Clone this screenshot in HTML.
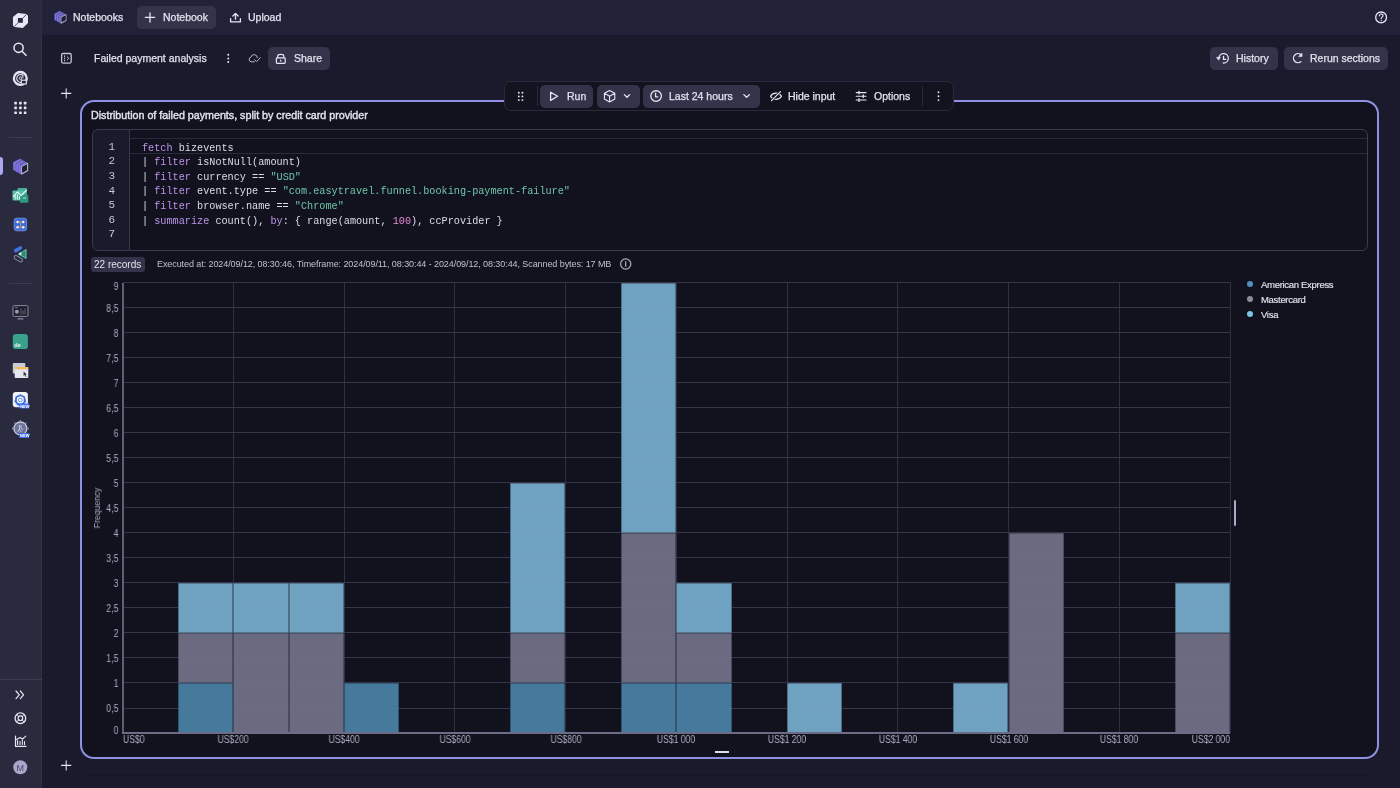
<!DOCTYPE html><html><head><meta charset="utf-8"><style>
*{box-sizing:border-box;margin:0;padding:0}
html,body{width:1400px;height:788px;overflow:hidden;background:#1a1a2c;font-family:"Liberation Sans",sans-serif;color:#e6e6ef}
.a{position:absolute}
.t,.code,.ax{will-change:transform}
.t{position:absolute;white-space:nowrap;font-size:10.5px;line-height:12px;color:#e2e2ee;-webkit-text-stroke:0.25px #e2e2ee}
.btn{position:absolute;background:#33344a;border-radius:5px}
.code{position:absolute;font-family:"Liberation Mono",monospace;font-size:10.2px;line-height:12px;white-space:pre;color:#dcdce8}
.kw{color:#bb92e8}.str{color:#6fc4a8}.num{color:#e68ad6}
.ax{position:absolute;font-size:10px;line-height:10px;color:#acacbf;white-space:nowrap}
#ov{position:absolute;left:0;top:0;width:1400px;height:788px;overflow:visible}
</style></head><body>
<div class="a" style="left:0;top:0;width:42px;height:788px;background:#2a2a3e"></div>
<div class="a" style="left:41px;top:0;width:1px;height:788px;background:#2f3045"></div>
<div class="a" style="left:42px;top:0;width:1358px;height:35px;background:#212238"></div>
<div class="a" style="left:9px;top:137px;width:23px;height:1px;background:#3c3c52"></div>
<div class="a" style="left:9px;top:283px;width:23px;height:1px;background:#3c3c52"></div>
<div class="a" style="left:0;top:679px;width:42px;height:1px;background:#3c3c52"></div>
<div class="a" style="left:0;top:157px;width:3px;height:18px;background:#a9a8f0;border-radius:0 3px 3px 0"></div>
<div class="btn" style="left:137px;top:6px;width:79px;height:23px"></div>
<div class="t" style="left:73px;top:11px">Notebooks</div>
<div class="t" style="left:163px;top:11px">Notebook</div>
<div class="t" style="left:248px;top:11px">Upload</div>
<div class="t" style="left:93.5px;top:52px">Failed payment analysis</div>
<div class="btn" style="left:268px;top:47px;width:62px;height:23px"></div>
<div class="t" style="left:294px;top:52px">Share</div>
<div class="btn" style="left:1210px;top:47px;width:68px;height:23px"></div>
<div class="t" style="left:1235.5px;top:52px">History</div>
<div class="btn" style="left:1284px;top:47px;width:104px;height:23px"></div>
<div class="t" style="left:1309.5px;top:52px">Rerun sections</div>
<div class="a" style="left:80px;top:100px;width:1299px;height:659px;border:2px solid #8f92e0;border-radius:14px;background:#12121f"></div>
<div class="t" style="left:91px;top:109px;font-size:10.7px;-webkit-text-stroke:0.4px #e2e2ee">Distribution of failed payments, split by credit card provider</div>
<div class="a" style="left:86px;top:773.5px;width:1284px;height:2px;background:#151524;border-radius:1px"></div>
<div class="a" style="left:504px;top:81px;width:450px;height:30px;border:1px solid #2a2a3e;border-radius:7px;background:#131320"></div>
<div class="a" style="left:536.5px;top:86px;width:1px;height:20px;background:#2a2a3e"></div>
<div class="a" style="left:921.5px;top:86px;width:1px;height:20px;background:#2a2a3e"></div>
<div class="btn" style="left:540px;top:85px;width:53px;height:23px"></div>
<div class="t" style="left:566.5px;top:90px">Run</div>
<div class="btn" style="left:597px;top:85px;width:43px;height:23px"></div>
<div class="btn" style="left:643px;top:85px;width:117px;height:23px"></div>
<div class="t" style="left:668.5px;top:90px">Last 24 hours</div>
<div class="t" style="left:788px;top:90px">Hide input</div>
<div class="t" style="left:874px;top:90px">Options</div>
<div class="a" style="left:91.5px;top:128.5px;width:1276px;height:122px;border:1px solid #3a3a50;border-radius:6px;background:linear-gradient(to right,#191a2b 0,#191a2b 37px,#12121f 37px)"></div>
<div class="a" style="left:128.7px;top:129px;width:1.3px;height:121px;background:#363850"></div>
<div class="a" style="left:130px;top:138px;width:1237px;height:16px;border-top:1px solid #2a2a3e;border-bottom:1px solid #2a2a3e"></div>
<div class="code" style="left:95px;top:140.7px;width:20px;text-align:right;color:#c4c4d4;font-size:11px">1</div>
<div class="code" style="left:142px;top:142.5px"><span class="kw">fetch</span> bizevents</div>
<div class="code" style="left:95px;top:155.3px;width:20px;text-align:right;color:#c4c4d4;font-size:11px">2</div>
<div class="code" style="left:142px;top:157.1px">| <span class="kw">filter</span> isNotNull(amount)</div>
<div class="code" style="left:95px;top:169.9px;width:20px;text-align:right;color:#c4c4d4;font-size:11px">3</div>
<div class="code" style="left:142px;top:171.7px">| <span class="kw">filter</span> currency == <span class="str">"USD"</span></div>
<div class="code" style="left:95px;top:184.6px;width:20px;text-align:right;color:#c4c4d4;font-size:11px">4</div>
<div class="code" style="left:142px;top:186.4px">| <span class="kw">filter</span> event.type == <span class="str">"com.easytravel.funnel.booking-payment-failure"</span></div>
<div class="code" style="left:95px;top:199.2px;width:20px;text-align:right;color:#c4c4d4;font-size:11px">5</div>
<div class="code" style="left:142px;top:201.0px">| <span class="kw">filter</span> browser.name == <span class="str">"Chrome"</span></div>
<div class="code" style="left:95px;top:213.8px;width:20px;text-align:right;color:#c4c4d4;font-size:11px">6</div>
<div class="code" style="left:142px;top:215.6px">| <span class="kw">summarize</span> count(), <span class="kw">by</span>: { range(amount, <span class="num">100</span>), ccProvider }</div>
<div class="code" style="left:95px;top:228.4px;width:20px;text-align:right;color:#c4c4d4;font-size:11px">7</div>
<div class="code" style="left:142px;top:230.2px"></div>
<div class="a" style="left:91px;top:257px;width:54px;height:14.5px;background:#33344b;border-radius:3px"></div>
<div class="t" style="left:93.5px;top:258.8px;font-size:10px;-webkit-text-stroke:0">22 records</div>
<div class="t" style="left:157px;top:258px;font-size:9px;letter-spacing:-0.08px;color:#c0c0cc;-webkit-text-stroke:0">Executed at: 2024/09/12, 08:30:46, Timeframe: 2024/09/11, 08:30:44 - 2024/09/12, 08:30:44, Scanned bytes: 17 MB</div>
<div class="a" style="left:122.5px;top:732.5px;width:1107.5px;height:1px;background:#2f2f44"></div>
<div class="a" style="left:122.5px;top:707.5px;width:1107.5px;height:1px;background:#2f2f44"></div>
<div class="a" style="left:122.5px;top:682.4px;width:1107.5px;height:1px;background:#2f2f44"></div>
<div class="a" style="left:122.5px;top:657.4px;width:1107.5px;height:1px;background:#2f2f44"></div>
<div class="a" style="left:122.5px;top:632.4px;width:1107.5px;height:1px;background:#2f2f44"></div>
<div class="a" style="left:122.5px;top:607.4px;width:1107.5px;height:1px;background:#2f2f44"></div>
<div class="a" style="left:122.5px;top:582.3px;width:1107.5px;height:1px;background:#2f2f44"></div>
<div class="a" style="left:122.5px;top:557.3px;width:1107.5px;height:1px;background:#2f2f44"></div>
<div class="a" style="left:122.5px;top:532.3px;width:1107.5px;height:1px;background:#2f2f44"></div>
<div class="a" style="left:122.5px;top:507.3px;width:1107.5px;height:1px;background:#2f2f44"></div>
<div class="a" style="left:122.5px;top:482.2px;width:1107.5px;height:1px;background:#2f2f44"></div>
<div class="a" style="left:122.5px;top:457.2px;width:1107.5px;height:1px;background:#2f2f44"></div>
<div class="a" style="left:122.5px;top:432.2px;width:1107.5px;height:1px;background:#2f2f44"></div>
<div class="a" style="left:122.5px;top:407.1px;width:1107.5px;height:1px;background:#2f2f44"></div>
<div class="a" style="left:122.5px;top:382.1px;width:1107.5px;height:1px;background:#2f2f44"></div>
<div class="a" style="left:122.5px;top:357.1px;width:1107.5px;height:1px;background:#2f2f44"></div>
<div class="a" style="left:122.5px;top:332.1px;width:1107.5px;height:1px;background:#2f2f44"></div>
<div class="a" style="left:122.5px;top:307.0px;width:1107.5px;height:1px;background:#2f2f44"></div>
<div class="a" style="left:122.5px;top:282.0px;width:1107.5px;height:1px;background:#2f2f44"></div>
<div class="a" style="left:232.8px;top:282.0px;width:1px;height:450.5px;background:#2f2f44"></div>
<div class="a" style="left:343.5px;top:282.0px;width:1px;height:450.5px;background:#2f2f44"></div>
<div class="a" style="left:454.2px;top:282.0px;width:1px;height:450.5px;background:#2f2f44"></div>
<div class="a" style="left:565.0px;top:282.0px;width:1px;height:450.5px;background:#2f2f44"></div>
<div class="a" style="left:675.8px;top:282.0px;width:1px;height:450.5px;background:#2f2f44"></div>
<div class="a" style="left:786.5px;top:282.0px;width:1px;height:450.5px;background:#2f2f44"></div>
<div class="a" style="left:897.2px;top:282.0px;width:1px;height:450.5px;background:#2f2f44"></div>
<div class="a" style="left:1008.0px;top:282.0px;width:1px;height:450.5px;background:#2f2f44"></div>
<div class="a" style="left:1118.8px;top:282.0px;width:1px;height:450.5px;background:#2f2f44"></div>
<div class="a" style="left:1229.5px;top:282.0px;width:1px;height:450.5px;background:#2f2f44"></div>
<div class="a" style="left:177.9px;top:682.9px;width:55.4px;height:50.1px;background:#457a9c;box-shadow:inset 0 0 0 0.6px rgba(18,18,31,.6)"></div>
<div class="a" style="left:177.9px;top:632.9px;width:55.4px;height:50.1px;background:#6a6b80;box-shadow:inset 0 0 0 0.6px rgba(18,18,31,.6)"></div>
<div class="a" style="left:177.9px;top:582.8px;width:55.4px;height:50.1px;background:#6fa2c0;box-shadow:inset 0 0 0 0.6px rgba(18,18,31,.6)"></div>
<div class="a" style="left:233.2px;top:632.9px;width:55.4px;height:100.1px;background:#6a6b80;box-shadow:inset 0 0 0 0.6px rgba(18,18,31,.6)"></div>
<div class="a" style="left:233.2px;top:582.8px;width:55.4px;height:50.1px;background:#6fa2c0;box-shadow:inset 0 0 0 0.6px rgba(18,18,31,.6)"></div>
<div class="a" style="left:288.6px;top:632.9px;width:55.4px;height:100.1px;background:#6a6b80;box-shadow:inset 0 0 0 0.6px rgba(18,18,31,.6)"></div>
<div class="a" style="left:288.6px;top:582.8px;width:55.4px;height:50.1px;background:#6fa2c0;box-shadow:inset 0 0 0 0.6px rgba(18,18,31,.6)"></div>
<div class="a" style="left:344.0px;top:682.9px;width:55.4px;height:50.1px;background:#457a9c;box-shadow:inset 0 0 0 0.6px rgba(18,18,31,.6)"></div>
<div class="a" style="left:510.1px;top:682.9px;width:55.4px;height:50.1px;background:#457a9c;box-shadow:inset 0 0 0 0.6px rgba(18,18,31,.6)"></div>
<div class="a" style="left:510.1px;top:632.9px;width:55.4px;height:50.1px;background:#6a6b80;box-shadow:inset 0 0 0 0.6px rgba(18,18,31,.6)"></div>
<div class="a" style="left:510.1px;top:482.7px;width:55.4px;height:150.2px;background:#6fa2c0;box-shadow:inset 0 0 0 0.6px rgba(18,18,31,.6)"></div>
<div class="a" style="left:620.9px;top:682.9px;width:55.4px;height:50.1px;background:#457a9c;box-shadow:inset 0 0 0 0.6px rgba(18,18,31,.6)"></div>
<div class="a" style="left:620.9px;top:532.8px;width:55.4px;height:150.2px;background:#6a6b80;box-shadow:inset 0 0 0 0.6px rgba(18,18,31,.6)"></div>
<div class="a" style="left:620.9px;top:282.5px;width:55.4px;height:250.3px;background:#6fa2c0;box-shadow:inset 0 0 0 0.6px rgba(18,18,31,.6)"></div>
<div class="a" style="left:676.2px;top:682.9px;width:55.4px;height:50.1px;background:#457a9c;box-shadow:inset 0 0 0 0.6px rgba(18,18,31,.6)"></div>
<div class="a" style="left:676.2px;top:632.9px;width:55.4px;height:50.1px;background:#6a6b80;box-shadow:inset 0 0 0 0.6px rgba(18,18,31,.6)"></div>
<div class="a" style="left:676.2px;top:582.8px;width:55.4px;height:50.1px;background:#6fa2c0;box-shadow:inset 0 0 0 0.6px rgba(18,18,31,.6)"></div>
<div class="a" style="left:787.0px;top:682.9px;width:55.4px;height:50.1px;background:#6fa2c0;box-shadow:inset 0 0 0 0.6px rgba(18,18,31,.6)"></div>
<div class="a" style="left:953.1px;top:682.9px;width:55.4px;height:50.1px;background:#6fa2c0;box-shadow:inset 0 0 0 0.6px rgba(18,18,31,.6)"></div>
<div class="a" style="left:1008.5px;top:532.8px;width:55.4px;height:200.2px;background:#6a6b80;box-shadow:inset 0 0 0 0.6px rgba(18,18,31,.6)"></div>
<div class="a" style="left:1174.6px;top:632.9px;width:55.4px;height:100.1px;background:#6a6b80;box-shadow:inset 0 0 0 0.6px rgba(18,18,31,.6)"></div>
<div class="a" style="left:1174.6px;top:582.8px;width:55.4px;height:50.1px;background:#6fa2c0;box-shadow:inset 0 0 0 0.6px rgba(18,18,31,.6)"></div>
<div class="a" style="left:122.5px;top:707.5px;width:1107.5px;height:1px;background:rgba(140,140,170,.08)"></div>
<div class="a" style="left:122.5px;top:682.4px;width:1107.5px;height:1px;background:rgba(140,140,170,.08)"></div>
<div class="a" style="left:122.5px;top:657.4px;width:1107.5px;height:1px;background:rgba(140,140,170,.08)"></div>
<div class="a" style="left:122.5px;top:632.4px;width:1107.5px;height:1px;background:rgba(140,140,170,.08)"></div>
<div class="a" style="left:122.5px;top:607.4px;width:1107.5px;height:1px;background:rgba(140,140,170,.08)"></div>
<div class="a" style="left:122.5px;top:582.3px;width:1107.5px;height:1px;background:rgba(140,140,170,.08)"></div>
<div class="a" style="left:122.5px;top:557.3px;width:1107.5px;height:1px;background:rgba(140,140,170,.08)"></div>
<div class="a" style="left:122.5px;top:532.3px;width:1107.5px;height:1px;background:rgba(140,140,170,.08)"></div>
<div class="a" style="left:122.5px;top:507.3px;width:1107.5px;height:1px;background:rgba(140,140,170,.08)"></div>
<div class="a" style="left:122.5px;top:482.2px;width:1107.5px;height:1px;background:rgba(140,140,170,.08)"></div>
<div class="a" style="left:122.5px;top:457.2px;width:1107.5px;height:1px;background:rgba(140,140,170,.08)"></div>
<div class="a" style="left:122.5px;top:432.2px;width:1107.5px;height:1px;background:rgba(140,140,170,.08)"></div>
<div class="a" style="left:122.5px;top:407.1px;width:1107.5px;height:1px;background:rgba(140,140,170,.08)"></div>
<div class="a" style="left:122.5px;top:382.1px;width:1107.5px;height:1px;background:rgba(140,140,170,.08)"></div>
<div class="a" style="left:122.5px;top:357.1px;width:1107.5px;height:1px;background:rgba(140,140,170,.08)"></div>
<div class="a" style="left:122.5px;top:332.1px;width:1107.5px;height:1px;background:rgba(140,140,170,.08)"></div>
<div class="a" style="left:122.5px;top:307.0px;width:1107.5px;height:1px;background:rgba(140,140,170,.08)"></div>
<div class="a" style="left:122.5px;top:282.0px;width:1107.5px;height:1px;background:rgba(140,140,170,.08)"></div>
<div class="a" style="left:122.2px;top:282.5px;width:1.6px;height:451.5px;background:#5e5e74"></div>
<div class="a" style="left:122.2px;top:732.1px;width:1107.8px;height:1.8px;background:#6c6c84"></div>
<div class="ax" style="left:80px;width:38.5px;text-align:right;top:726.0px;transform:scaleX(.88);transform-origin:100% 0">0</div>
<div class="ax" style="left:80px;width:38.5px;text-align:right;top:704.0px;transform:scaleX(.88);transform-origin:100% 0">0,5</div>
<div class="ax" style="left:80px;width:38.5px;text-align:right;top:678.9px;transform:scaleX(.88);transform-origin:100% 0">1</div>
<div class="ax" style="left:80px;width:38.5px;text-align:right;top:653.9px;transform:scaleX(.88);transform-origin:100% 0">1,5</div>
<div class="ax" style="left:80px;width:38.5px;text-align:right;top:628.9px;transform:scaleX(.88);transform-origin:100% 0">2</div>
<div class="ax" style="left:80px;width:38.5px;text-align:right;top:603.9px;transform:scaleX(.88);transform-origin:100% 0">2,5</div>
<div class="ax" style="left:80px;width:38.5px;text-align:right;top:578.8px;transform:scaleX(.88);transform-origin:100% 0">3</div>
<div class="ax" style="left:80px;width:38.5px;text-align:right;top:553.8px;transform:scaleX(.88);transform-origin:100% 0">3,5</div>
<div class="ax" style="left:80px;width:38.5px;text-align:right;top:528.8px;transform:scaleX(.88);transform-origin:100% 0">4</div>
<div class="ax" style="left:80px;width:38.5px;text-align:right;top:503.8px;transform:scaleX(.88);transform-origin:100% 0">4,5</div>
<div class="ax" style="left:80px;width:38.5px;text-align:right;top:478.7px;transform:scaleX(.88);transform-origin:100% 0">5</div>
<div class="ax" style="left:80px;width:38.5px;text-align:right;top:453.7px;transform:scaleX(.88);transform-origin:100% 0">5,5</div>
<div class="ax" style="left:80px;width:38.5px;text-align:right;top:428.7px;transform:scaleX(.88);transform-origin:100% 0">6</div>
<div class="ax" style="left:80px;width:38.5px;text-align:right;top:403.6px;transform:scaleX(.88);transform-origin:100% 0">6,5</div>
<div class="ax" style="left:80px;width:38.5px;text-align:right;top:378.6px;transform:scaleX(.88);transform-origin:100% 0">7</div>
<div class="ax" style="left:80px;width:38.5px;text-align:right;top:353.6px;transform:scaleX(.88);transform-origin:100% 0">7,5</div>
<div class="ax" style="left:80px;width:38.5px;text-align:right;top:328.6px;transform:scaleX(.88);transform-origin:100% 0">8</div>
<div class="ax" style="left:80px;width:38.5px;text-align:right;top:303.5px;transform:scaleX(.88);transform-origin:100% 0">8,5</div>
<div class="ax" style="left:80px;width:38.5px;text-align:right;top:281.5px;transform:scaleX(.88);transform-origin:100% 0">9</div>
<div class="ax" style="left:122.5px;top:735px;transform:scaleX(.86);transform-origin:0 0">US$0</div>
<div class="ax" style="left:183.2px;width:100px;text-align:center;top:735px;transform:scaleX(.86)">US$200</div>
<div class="ax" style="left:294.0px;width:100px;text-align:center;top:735px;transform:scaleX(.86)">US$400</div>
<div class="ax" style="left:404.8px;width:100px;text-align:center;top:735px;transform:scaleX(.86)">US$600</div>
<div class="ax" style="left:515.5px;width:100px;text-align:center;top:735px;transform:scaleX(.86)">US$800</div>
<div class="ax" style="left:626.2px;width:100px;text-align:center;top:735px;transform:scaleX(.86)">US$1 000</div>
<div class="ax" style="left:737.0px;width:100px;text-align:center;top:735px;transform:scaleX(.86)">US$1 200</div>
<div class="ax" style="left:847.8px;width:100px;text-align:center;top:735px;transform:scaleX(.86)">US$1 400</div>
<div class="ax" style="left:958.5px;width:100px;text-align:center;top:735px;transform:scaleX(.86)">US$1 600</div>
<div class="ax" style="left:1069.2px;width:100px;text-align:center;top:735px;transform:scaleX(.86)">US$1 800</div>
<div class="ax" style="left:1130.0px;width:100px;text-align:right;top:735px;transform:scaleX(.86);transform-origin:100% 0">US$2 000</div>
<div class="ax" style="left:97px;top:508px;transform:translate(-50%,-50%) rotate(-90deg);font-size:8.6px;color:#a8a8bc">Frequency</div>
<div class="a" style="left:1234px;top:500px;width:2px;height:25.5px;background:#a9a9cc;border-radius:1px"></div>
<div class="a" style="left:714.5px;top:750.5px;width:14px;height:2px;background:#dcdcec"></div>
<div class="a" style="left:1247px;top:281px;width:6px;height:6px;border-radius:50%;background:#4f8fbb"></div>
<div class="t" style="left:1260.5px;top:278.5px;font-size:9.5px;letter-spacing:-0.3px;-webkit-text-stroke:0.15px #e2e2ee">American Express</div>
<div class="a" style="left:1247px;top:296px;width:6px;height:6px;border-radius:50%;background:#8c8c9c"></div>
<div class="t" style="left:1260.5px;top:293.5px;font-size:9.5px;letter-spacing:-0.3px;-webkit-text-stroke:0.15px #e2e2ee">Mastercard</div>
<div class="a" style="left:1247px;top:311px;width:6px;height:6px;border-radius:50%;background:#7ec3e6"></div>
<div class="t" style="left:1260.5px;top:308.5px;font-size:9.5px;letter-spacing:-0.3px;-webkit-text-stroke:0.15px #e2e2ee">Visa</div>
<svg id="ov" viewBox="0 0 1400 788"><path fill="#e6e6f4" fill-rule="evenodd" d="M12.95 17.1 L17.9 12.9 L26.5 14.1 L28 15.8 L28 23 L22.9 28 L14.6 27.1 L12.95 25.5 Z M17.9 18.1 L22.85 18.1 L22.85 22.85 L17.9 22.85 Z"/><path stroke="#2a2a3d" stroke-width="0.8" d="M22.85 18.1 L26.5 14.4 M17.9 22.85 L14.4 26.4"/><circle cx="18.6" cy="47.8" r="4.6" fill="none" stroke="#e6e6f4" stroke-width="1.5" stroke-linecap="round" stroke-linejoin="round"/><path d="M22 51.3 L26 55.2" fill="none" stroke="#e6e6f4" stroke-width="1.6" stroke-linecap="round" stroke-linejoin="round"/><circle cx="20.3" cy="78.4" r="6.4" fill="none" stroke="#e6e6f4" stroke-width="2.3"/><path d="M23.4 75.6 A3.9 3.9 0 1 0 23.4 81.2" fill="none" stroke="#e6e6f4" stroke-width="1.2"/><circle cx="20.6" cy="78.2" r="1.3" fill="none" stroke="#e6e6f4" stroke-width="1"/><path d="M22.6 75 L23 78" stroke="#e6e6f4" stroke-width="0.9"/><rect x="21.3" y="80.2" width="5" height="3.8" fill="#2a2a3d" stroke="#e6e6f4" stroke-width="1.1"/><rect x="14.3" y="101.8" width="2.6" height="2.6" rx="0.4" fill="#e6e6f4"/><rect x="14.3" y="106.6" width="2.6" height="2.6" rx="0.4" fill="#e6e6f4"/><rect x="14.3" y="111.5" width="2.6" height="2.6" rx="0.4" fill="#e6e6f4"/><rect x="19.1" y="101.8" width="2.6" height="2.6" rx="0.4" fill="#e6e6f4"/><rect x="19.1" y="106.6" width="2.6" height="2.6" rx="0.4" fill="#e6e6f4"/><rect x="19.1" y="111.5" width="2.6" height="2.6" rx="0.4" fill="#e6e6f4"/><rect x="23.8" y="101.8" width="2.6" height="2.6" rx="0.4" fill="#e6e6f4"/><rect x="23.8" y="106.6" width="2.6" height="2.6" rx="0.4" fill="#e6e6f4"/><rect x="23.8" y="111.5" width="2.6" height="2.6" rx="0.4" fill="#e6e6f4"/><g transform="translate(54.5,10.5) scale(1.0)"><path transform="translate(0.0,0.0)" d="M0 3.3 L5.3 0.4 L6.8 1.2 L1.6 4.1 L1.6 10.3 L0 9.5 Z" fill="#7e6ef8"/><path transform="translate(0.0,0.0)" d="M1.6 4.1 L6.8 1.2 L7.2 1.45 L2 4.35 L2 10.5 L1.6 10.3 Z" fill="#a9a9c4"/><path transform="translate(2.3,1.25)" d="M0 3.3 L5.3 0.4 L6.8 1.2 L1.6 4.1 L1.6 10.3 L0 9.5 Z" fill="#7e6ef8"/><path transform="translate(2.3,1.25)" d="M1.6 4.1 L6.8 1.2 L7.2 1.45 L2 4.35 L2 10.5 L1.6 10.3 Z" fill="#a9a9c4"/><path transform="translate(4.6,2.5)" d="M0 3.3 L5.3 0.4 L6.8 1.2 L1.6 4.1 L1.6 10.3 L0 9.5 Z" fill="#7e6ef8"/><path d="M6.2 6.6 L11.4 3.7 L12 4.1 L12 10.3 L6.8 13.3 L6.2 13.0 Z M7.2 7.1 L7.2 11.6 L11 9.5 L11 5.0 Z" fill="#a9a9c4" fill-rule="evenodd"/><path d="M7.2 7.1 L7.2 11.6 L11 9.5 L11 5.0 Z" fill="#1e1e30"/></g><g transform="translate(13.2,158.2) scale(1.25)"><path transform="translate(0.0,0.0)" d="M0 3.3 L5.3 0.4 L6.8 1.2 L1.6 4.1 L1.6 10.3 L0 9.5 Z" fill="#7e6ef8"/><path transform="translate(0.0,0.0)" d="M1.6 4.1 L6.8 1.2 L7.2 1.45 L2 4.35 L2 10.5 L1.6 10.3 Z" fill="#a9a9c4"/><path transform="translate(2.3,1.25)" d="M0 3.3 L5.3 0.4 L6.8 1.2 L1.6 4.1 L1.6 10.3 L0 9.5 Z" fill="#7e6ef8"/><path transform="translate(2.3,1.25)" d="M1.6 4.1 L6.8 1.2 L7.2 1.45 L2 4.35 L2 10.5 L1.6 10.3 Z" fill="#a9a9c4"/><path transform="translate(4.6,2.5)" d="M0 3.3 L5.3 0.4 L6.8 1.2 L1.6 4.1 L1.6 10.3 L0 9.5 Z" fill="#7e6ef8"/><path d="M6.2 6.6 L11.4 3.7 L12 4.1 L12 10.3 L6.8 13.3 L6.2 13.0 Z M7.2 7.1 L7.2 11.6 L11 9.5 L11 5.0 Z" fill="#a9a9c4" fill-rule="evenodd"/><path d="M7.2 7.1 L7.2 11.6 L11 9.5 L11 5.0 Z" fill="#1e1e30"/></g><rect x="17.5" y="188" width="9.5" height="7" rx="0.8" fill="#45ad95"/><rect x="12.5" y="190.5" width="11.5" height="10" rx="0.8" fill="#58bfa6"/><rect x="19.8" y="195" width="8.5" height="7.8" rx="0.8" fill="#319880"/><path d="M12.9 197 L17.4 192 L21.2 195.6 L26.6 190" fill="none" stroke="#f4fffb" stroke-width="1.1"/><path d="M15.2 195.2 L15.2 199.6 M17.4 194.6 L17.4 199.6 M19.6 196.2 L19.6 199.6" stroke="#e8fff8" stroke-width="1"/><path d="M23 198 L26 198" stroke="#cdeee4" stroke-width="0.9"/><rect x="14.2" y="218.2" width="12.4" height="12.6" rx="2.5" fill="#3d6ddc" stroke="#7a9cf0" stroke-width="0.8"/><circle cx="17.6" cy="222" r="1.2" fill="#fff"/><circle cx="23.2" cy="222" r="1.2" fill="#fff"/><circle cx="17.6" cy="227.2" r="1.2" fill="#fff"/><circle cx="23.2" cy="227.2" r="1.3" fill="#fff"/><path d="M17.6 222 L23.2 222 M20.4 222 L20.4 227.2 M17.6 227.2 L23.2 227.2" stroke="#f0a050" stroke-width="0.7"/><rect x="13.8" y="256.9" width="9" height="3.6" rx="1.8" fill="none" stroke="#8a8ca8" stroke-width="1" transform="rotate(30 18.3 258.7)"/><rect x="13.5" y="247.5" width="9" height="3.6" rx="1.8" fill="#3f72e6" transform="rotate(-30 18 249.3)"/><path d="M18.6 254.1 L26 249.6 L26 258.3 Z" fill="#2b8a70" stroke="#56bfa2" stroke-width="1.1" stroke-linejoin="round"/><circle cx="20.3" cy="253.8" r="1.2" fill="#f4f4ff"/><rect x="13" y="305.6" width="15" height="10.8" rx="1.2" fill="#1e1e2c" stroke="#8a8a9e" stroke-width="1"/><rect x="17.5" y="318.2" width="6" height="1.3" rx="0.6" fill="#8a8aaa"/><circle cx="16.9" cy="311.8" r="2" fill="#9a9ab8"/><rect x="20.5" y="308.5" width="0.9" height="6" fill="#6a6a80"/><rect x="22.6" y="310.5" width="0.9" height="4" fill="#6a6a80"/><rect x="24.6" y="308.5" width="0.9" height="6" fill="#6a6a80"/><rect x="14.8" y="307.4" width="3" height="0.7" fill="#9a9ab8"/><rect x="12.8" y="334" width="15.1" height="15.1" rx="3.2" fill="#3aa28c"/><text x="14.3" y="346.8" font-family="Liberation Sans" font-size="5.6" font-weight="bold" fill="#eefaf5">de</text><rect x="12.8" y="363" width="12.5" height="10.5" rx="1" fill="#c9cbd8"/><rect x="14.7" y="367" width="13.6" height="11" rx="1" fill="#e4e5ee"/><rect x="14.7" y="367" width="13.6" height="2.2" rx="0.6" fill="#f4bc58"/><path d="M23.6 371.5 L23.6 376 L24.7 375 L25.8 377 L26.4 376.7 L25.4 374.8 L26.8 374.6 Z" fill="#333"/><rect x="12.8" y="392" width="15.1" height="15.2" rx="3" fill="#f4f4f8"/><path d="M20.3 394.2 L25 396.5 L26.1 401.5 L23 405.4 L17.6 405.4 L14.5 401.5 L15.6 396.5 Z" fill="#3d6fe0"/><circle cx="20.3" cy="400" r="2.9" fill="none" stroke="#fff" stroke-width="1.1"/><circle cx="20.3" cy="400" r="1" fill="#fff"/><path d="M20.3 396.2 L20.3 403.8 M17 398.1 L23.6 401.9 M17 401.9 L23.6 398.1" stroke="#fff" stroke-width="0.7"/><rect x="19.3" y="403.6" width="9.8" height="5" rx="0.6" fill="#3d6ff0"/><text x="20.2" y="407.8" font-family="Liberation Sans" font-size="4" font-weight="bold" fill="#fff">NEW</text><circle cx="20.4" cy="428.5" r="6.5" fill="#6d7498" stroke="#c4c8e0" stroke-width="1.3"/><path d="M20.4 421 l0 -0.8 M13 428.5 l-0.8 0 M27.8 428.5 l0.8 0 M15.2 423.2 l-0.6 -0.6 M25.6 423.2 l0.6 -0.6" stroke="#b8bcd8" stroke-width="1.3"/><path d="M19.5 425 L19.5 429 L17.5 432 M19.5 429 L21 432 M21 425 L21 428 L23 430" fill="none" stroke="#d0d4e8" stroke-width="0.8"/><rect x="19.2" y="432.9" width="9.8" height="5" rx="0.6" fill="#3d6ff0"/><text x="20.1" y="437.1" font-family="Liberation Sans" font-size="4" font-weight="bold" fill="#fff">NEW</text><path d="M16 691 L19.3 694.8 L16 698.6 M20.3 691 L23.6 694.8 L20.3 698.6" fill="none" stroke="#e6e6f4" stroke-width="1.2" stroke-linecap="round" stroke-linejoin="round"/><circle cx="20.4" cy="718.2" r="5.3" fill="none" stroke="#e6e6f4" stroke-width="1.3" stroke-linecap="round" stroke-linejoin="round"/><circle cx="20.4" cy="718.2" r="2.3" fill="none" stroke="#e6e6f4" stroke-width="1.2" stroke-linecap="round" stroke-linejoin="round"/><path d="M16.8 714.6 L18.7 716.5 M24 714.6 L22.1 716.5 M16.8 721.8 L18.7 719.9 M24 721.8 L22.1 719.9" fill="none" stroke="#e6e6f4" stroke-width="1" stroke-linecap="round" stroke-linejoin="round"/><path d="M15.5 736 L15.5 746.3 L26 746.3" fill="none" stroke="#e6e6f4" stroke-width="1.2" stroke-linecap="round" stroke-linejoin="round"/><path d="M17.6 744.5 L17.6 740.5 M20 744.5 L20 741.5 M22.3 744.5 L22.3 740 M24.5 744.5 L24.5 741.5 M16.5 739.5 L20 737.5 L22.5 739 L25.8 736.2" fill="none" stroke="#e6e6f4" stroke-width="1.1" stroke-linecap="round" stroke-linejoin="round"/><circle cx="20.3" cy="767.3" r="7" fill="#a9a6cc"/><text x="20.3" y="770.8" text-anchor="middle" font-family="Liberation Sans" font-size="9" fill="#4a4868">M</text><path d="M150 12.8 L150 22 M145.3 17.4 L154.7 17.4" fill="none" stroke="#e6e6f4" stroke-width="1.3" stroke-linecap="round" stroke-linejoin="round"/><path d="M230.6 18.6 L230.6 21.9 L240.4 21.9 L240.4 18.6 M235.5 19.2 L235.5 13.6 M232.9 16 L235.5 13.4 L238.1 16" fill="none" stroke="#e6e6f4" stroke-width="1.3" stroke-linecap="round" stroke-linejoin="round"/><circle cx="1381.1" cy="17.4" r="5.4" fill="none" stroke="#e6e6f4" stroke-width="1.3" stroke-linecap="round" stroke-linejoin="round"/><path d="M1379.4 15.8 C1379.4 13.4 1383 13.4 1383 15.6 C1383 17 1381.2 17.2 1381.2 18.6" fill="none" stroke="#e6e6f4" stroke-width="1.2" stroke-linecap="round" stroke-linejoin="round"/><circle cx="1381.2" cy="20.5" r="0.7" fill="#e6e6f4"/><rect x="61.6" y="53.5" width="9.6" height="9.6" rx="1.5" fill="none" stroke="#c4c4d8" stroke-width="1.3" stroke-linecap="round" stroke-linejoin="round"/><path d="M64.6 55.8 L64.6 56.6 M64.6 58 L64.6 58.8 M64.6 60.2 L64.6 61" fill="none" stroke="#c4c4d8" stroke-width="1" stroke-linecap="round" stroke-linejoin="round"/><path d="M67.2 56.8 L68.8 58.3 L67.2 59.9" fill="none" stroke="#c4c4d8" stroke-width="1" stroke-linecap="round" stroke-linejoin="round"/><circle cx="228.25" cy="54.75" r="1" fill="#e6e6f4"/><circle cx="228.25" cy="58.5" r="1" fill="#e6e6f4"/><circle cx="228.25" cy="62.1" r="1" fill="#e6e6f4"/><path d="M254.4 61.8 L251.2 61.8 A2.35 2.35 0 0 1 250.9 57.2 A3.3 3.3 0 0 1 257.4 57.6" fill="none" stroke="#bcbcd0" stroke-width="0.95" stroke-linecap="round" stroke-linejoin="round"/><path d="M254.8 59.8 L256.6 61.7 L260.2 57.7" fill="none" stroke="#bcbcd0" stroke-width="0.95" stroke-linecap="round" stroke-linejoin="round"/><path d="M277.7 57.6 L277.7 56.2 C277.7 53.8 283.8 53.8 283.8 56.2 L283.8 57.6" fill="none" stroke="#e6e6f4" stroke-width="1.2" stroke-linecap="round" stroke-linejoin="round"/><rect x="276.4" y="57.8" width="8.8" height="5.6" rx="0.8" fill="none" stroke="#e6e6f4" stroke-width="1.2" stroke-linecap="round" stroke-linejoin="round"/><rect x="280.2" y="59.6" width="1.2" height="2" fill="#e6e6f4"/><path d="M1223.4 63 A4.7 4.7 0 1 0 1219 57.6" fill="none" stroke="#e6e6f4" stroke-width="1.3" stroke-linecap="round" stroke-linejoin="round"/><path d="M1216.5 57.3 L1220.4 57.3 L1218.5 60.2 Z" fill="#e6e6f4" stroke="#e6e6f4" stroke-width="0.5" stroke-linejoin="round"/><path d="M1223.5 56.3 L1223.5 59.4 L1225.7 59.4" fill="none" stroke="#e6e6f4" stroke-width="1.3" stroke-linecap="round" stroke-linejoin="round"/><path d="M1301.4 55.2 A4.5 4.5 0 1 0 1300.8 61.7" fill="none" stroke="#e6e6f4" stroke-width="1.3" stroke-linecap="round" stroke-linejoin="round"/><path d="M1302 53.2 L1302 56.6 L1298.6 56.6 Z" fill="#e6e6f4" stroke="#e6e6f4" stroke-width="0.6" stroke-linejoin="round"/><circle cx="518.8" cy="92.8" r="0.95" fill="#e6e6f4"/><circle cx="518.8" cy="96.4" r="0.95" fill="#e6e6f4"/><circle cx="518.8" cy="100.1" r="0.95" fill="#e6e6f4"/><circle cx="522.4" cy="92.8" r="0.95" fill="#e6e6f4"/><circle cx="522.4" cy="96.4" r="0.95" fill="#e6e6f4"/><circle cx="522.4" cy="100.1" r="0.95" fill="#e6e6f4"/><path d="M550.6 92.2 L550.6 100.4 L557.6 96.3 Z" fill="none" stroke="#e6e6f4" stroke-width="1.3" stroke-linecap="round" stroke-linejoin="round"/><path d="M609.6 90.4 L614.8 93.3 L614.8 99 L609.6 101.9 L604.4 99 L604.4 93.3 Z M604.4 93.3 L609.6 96.2 L614.8 93.3 M609.6 96.2 L609.6 101.9" fill="none" stroke="#e6e6f4" stroke-width="1.1" stroke-linecap="round" stroke-linejoin="round"/><path d="M624.3 94.6 L627 97.3 L629.7 94.6" fill="none" stroke="#e6e6f4" stroke-width="1.3" stroke-linecap="round" stroke-linejoin="round"/><circle cx="656.1" cy="96.05" r="5.3" fill="none" stroke="#e6e6f4" stroke-width="1.3" stroke-linecap="round" stroke-linejoin="round"/><path d="M655.6 93.2 L655.6 96.8 L657.9 96.8" fill="none" stroke="#e6e6f4" stroke-width="1.3" stroke-linecap="round" stroke-linejoin="round"/><path d="M743.8 94.6 L746.6 97.3 L749.4 94.6" fill="none" stroke="#e6e6f4" stroke-width="1.3" stroke-linecap="round" stroke-linejoin="round"/><path d="M770.5 96.2 C773 92 779 92 781.5 96.2 C779 100.4 773 100.4 770.5 96.2 Z" fill="none" stroke="#e6e6f4" stroke-width="1.2" stroke-linecap="round" stroke-linejoin="round"/><path d="M771.5 100.6 L780.5 91.6" stroke="#131320" stroke-width="2.4"/><path d="M771.5 100.6 L780.5 91.6" fill="none" stroke="#e6e6f4" stroke-width="1.2" stroke-linecap="round" stroke-linejoin="round"/><path d="M856.2 92.6 L866 92.6 M856.2 96.2 L866 96.2 M856.2 100 L866 100" fill="none" stroke="#e6e6f4" stroke-width="1.1" stroke-linecap="round" stroke-linejoin="round"/><path d="M859 91.2 L859 94 M863.3 94.8 L863.3 97.6 M859 98.6 L859 101.4" fill="none" stroke="#e6e6f4" stroke-width="1.2" stroke-linecap="round" stroke-linejoin="round"/><circle cx="938.5" cy="92.2" r="0.95" fill="#e6e6f4"/><circle cx="938.5" cy="96.2" r="0.95" fill="#e6e6f4"/><circle cx="938.5" cy="100.1" r="0.95" fill="#e6e6f4"/><path d="M66.2 88.7 L66.2 98 M61.5 93.35 L70.9 93.35" fill="none" stroke="#e6e6f4" stroke-width="1.05" stroke-linecap="round" stroke-linejoin="round"/><path d="M66.2 760.7 L66.2 770 M61.5 765.35 L70.9 765.35" fill="none" stroke="#e6e6f4" stroke-width="1.05" stroke-linecap="round" stroke-linejoin="round"/><circle cx="625.7" cy="264" r="5.1" fill="none" stroke="#b0b0c8" stroke-width="1.2"/><path d="M625.7 261.3 L625.7 266.8" stroke="#b0b0c8" stroke-width="1.2"/></svg>
</body></html>
